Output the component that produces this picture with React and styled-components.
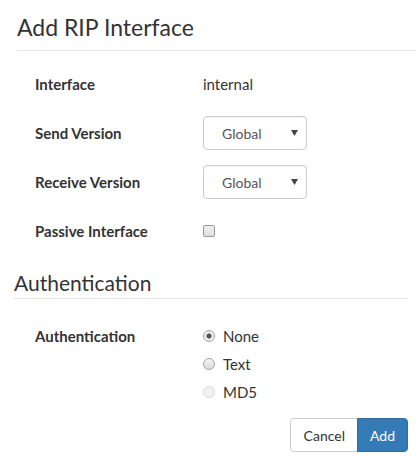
import React, { useState } from "react";
import styled, { createGlobalStyle } from "styled-components";

const GlobalStyle = createGlobalStyle`
  body {
    margin: 0;
    background: #fff;
    font-family: Lato, "Open Sans", "Liberation Sans", sans-serif;
    color: #333;
  }
`;

const Page = styled.div`
  width: 416px;
  display: flex;
  flex-direction: column;
`;

const SectionTitle = styled.h2`
  margin: ${(props) => props.margin};
  padding: ${(props) => props.padding};
  font-size: ${(props) => props.size || "22px"};
  line-height: 26px;
  font-weight: 400;
  color: #333;
  border-bottom: 1px solid #e5e5e5;
`;

const Rows = styled.div`
  display: flex;
  flex-direction: column;
  gap: 15px;
  padding-left: 35px;
  margin-top: ${(props) => props.offset || "15px"};
`;

const Row = styled.div`
  display: flex;
  align-items: ${(props) => (props.top ? "flex-start" : "center")};
  min-height: ${(props) => props.height || "34px"};
`;

const Label = styled.div`
  width: 168px;
  font-size: 15px;
  font-weight: 700;
  line-height: 20px;
`;

const Value = styled.div`
  font-size: 15px;
  line-height: 20px;
`;

const SelectBox = styled.div`
  box-sizing: border-box;
  width: 104px;
  height: 34px;
  border: 1px solid #ccc;
  border-radius: 4px;
  display: flex;
  align-items: center;
  justify-content: space-between;
  padding: 0 8px 0 18px;
  font-size: 14px;
  color: #555;
  box-shadow: inset 0 1px 1px rgba(0, 0, 0, 0.04);
`;

const Check = styled.input.attrs({ type: "checkbox" })`
  appearance: none;
  box-sizing: border-box;
  width: 12px;
  height: 12px;
  margin: 0;
  border: 1px solid #9a9a9a;
  border-radius: 2px;
  background: linear-gradient(#f0f0f0, #dedede);
`;

const RadioList = styled.div`
  display: flex;
  flex-direction: column;
  gap: 8px;
`;

const RadioLine = styled.label`
  display: flex;
  align-items: center;
  gap: 8px;
  font-size: 15px;
  line-height: 20px;
  color: #333;
`;

const Radio = styled.input.attrs({ type: "radio" })`
  appearance: none;
  box-sizing: border-box;
  width: 12px;
  height: 12px;
  margin: 0;
  border-radius: 50%;
  border: 1px solid ${(props) => (props.disabled ? "#d8d8d8" : "#a4a4a4")};
  background: ${(props) =>
    props.disabled ? "#f1f1f1" : "linear-gradient(#f4f4f4, #dcdcdc)"};
  &:checked {
    background: radial-gradient(circle, #555 0 2.3px, #ececec 2.8px);
  }
`;

const Footer = styled.div`
  display: flex;
  justify-content: flex-end;
  margin: 16px 8px 0 0;
`;

const Button = styled.button`
  height: 34px;
  padding: ${(props) => (props.primary ? "0 12px" : "0 12px 0 13px")};
  font-family: inherit;
  font-size: 14px;
  border: 1px solid ${(props) => (props.primary ? "#2e6da4" : "#ccc")};
  background: ${(props) => (props.primary ? "#337ab7" : "#fff")};
  color: ${(props) => (props.primary ? "#fff" : "#333")};
  border-radius: ${(props) => (props.primary ? "0 4px 4px 0" : "4px 0 0 4px")};
  margin-left: ${(props) => (props.primary ? "-1px" : "0")};
`;

function Select({ value }) {
  return (
    <SelectBox>
      {value}
      <svg width="7" height="6" viewBox="0 0 7 6">
        <path d="M0 0 H7 L3.5 6 Z" fill="#444" />
      </svg>
    </SelectBox>
  );
}

export default function App() {
  const [auth, setAuth] = useState("none");

  return (
    <Page>
      <GlobalStyle />
      <SectionTitle margin="0 0 0 17px" padding="14px 0 10px" size="23px">
        Add RIP Interface
      </SectionTitle>
      <Rows>
        <Row height="35px">
          <Label>Interface</Label>
          <Value>internal</Value>
        </Row>
        <Row>
          <Label>Send Version</Label>
          <Select value="Global" />
        </Row>
        <Row>
          <Label>Receive Version</Label>
          <Select value="Global" />
        </Row>
        <Row>
          <Label>Passive Interface</Label>
          <Check />
        </Row>
      </Rows>
      <SectionTitle margin="22px 8px 0 14px" padding="0 0 2px" size="21px">
        Authentication
      </SectionTitle>
      <Rows offset="27px">
        <Row top height="auto">
          <Label>Authentication</Label>
          <RadioList>
            <RadioLine>
              <Radio
                name="auth"
                checked={auth === "none"}
                onChange={() => setAuth("none")}
              />
              None
            </RadioLine>
            <RadioLine>
              <Radio
                name="auth"
                checked={auth === "text"}
                onChange={() => setAuth("text")}
              />
              Text
            </RadioLine>
            <RadioLine>
              <Radio name="auth" disabled />
              MD5
            </RadioLine>
          </RadioList>
        </Row>
      </Rows>
      <Footer>
        <Button>Cancel</Button>
        <Button primary>Add</Button>
      </Footer>
    </Page>
  );
}
